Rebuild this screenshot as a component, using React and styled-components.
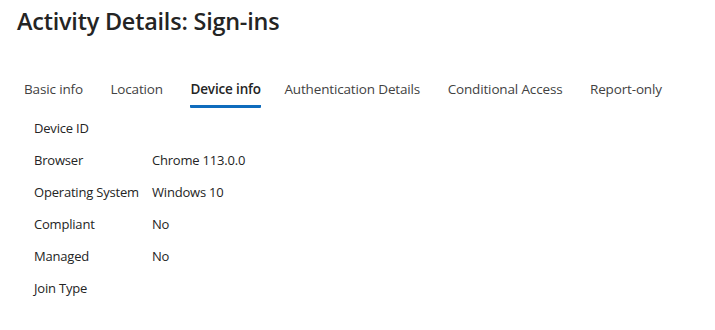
import React from 'react';
import styled, { createGlobalStyle } from 'styled-components';

const GlobalStyle = createGlobalStyle`
  body {
    margin: 0;
    background: #ffffff;
    font-family: 'Segoe UI', 'Open Sans', sans-serif;
    color: #242424;
  }
`;

const Page = styled.div`
  width: 715px;
  height: 330px;
  padding: 5px 0 0 17px;
  box-sizing: border-box;
`;

const Title = styled.h1`
  margin: 0;
  font-size: 23.4px;
  font-weight: 600;
  line-height: 32px;
  color: #242424;
  letter-spacing: -0.2px;
`;

const TabBar = styled.div`
  display: flex;
  gap: 27.5px;
  margin: 42px 0 0 7px;
`;

const Tab = styled.div`
  font-size: 13.5px;
  line-height: 20px;
  padding-bottom: 6px;
  letter-spacing: -0.15px;
  color: ${(p) => (p.$active ? '#242424' : '#424242')};
  font-weight: ${(p) => (p.$active ? 600 : 400)};
  margin-right: ${(p) => (p.$active ? '-4px' : '0')};
  border-bottom: 3px solid ${(p) => (p.$active ? '#0f6cbd' : 'transparent')};
  border-radius: 1px;
`;

const Details = styled.div`
  display: grid;
  grid-template-columns: 118px auto;
  grid-auto-rows: 32px;
  align-items: center;
  margin: 4px 0 0 17px;
  font-size: 13px;
  letter-spacing: -0.2px;
  color: #242424;
`;

const Label = styled.div``;
const Value = styled.div``;

const tabs = ['Basic info', 'Location', 'Device info', 'Authentication Details', 'Conditional Access', 'Report-only'];

const rows = [
  ['Device ID', ''],
  ['Browser', 'Chrome 113.0.0'],
  ['Operating System', 'Windows 10'],
  ['Compliant', 'No'],
  ['Managed', 'No'],
  ['Join Type', ''],
];

export default function App() {
  return (
    <Page>
      <GlobalStyle />
      <Title>Activity Details: Sign-ins</Title>
      <TabBar>
        {tabs.map((t) => (
          <Tab key={t} $active={t === 'Device info'}>{t}</Tab>
        ))}
      </TabBar>
      <Details>
        {rows.map(([l, v]) => (
          <React.Fragment key={l}>
            <Label>{l}</Label>
            <Value>{v}</Value>
          </React.Fragment>
        ))}
      </Details>
    </Page>
  );
}
